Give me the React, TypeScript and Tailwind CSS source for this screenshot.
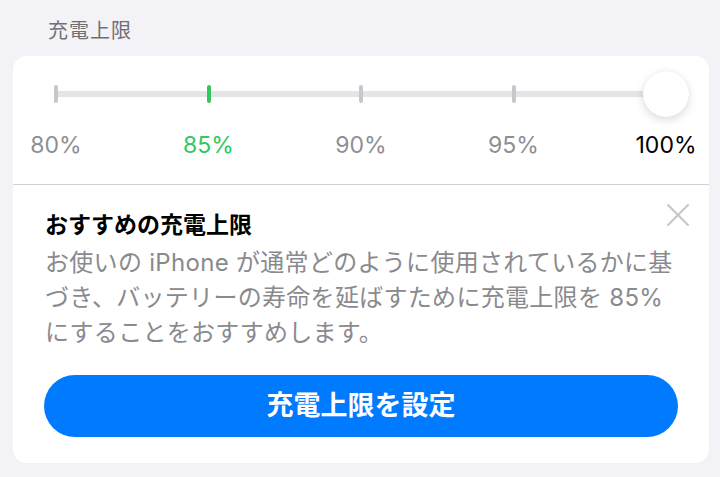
const stops = [
  { label: '80%', kind: 'tick' },
  { label: '85%', kind: 'recommended' },
  { label: '90%', kind: 'tick' },
  { label: '95%', kind: 'tick' },
  { label: '100%', kind: 'thumb' },
]

function LimitSlider() {
  return (
    <div className="relative px-[11px] pt-[15px] pb-[25px]">
      <div className="absolute left-[43px] right-[43px] top-[35px] h-[6px] rounded-full bg-[#e4e4e9]" />
      <div className="relative flex justify-between">
        {stops.map((stop) => (
          <div key={stop.label} className="flex w-[64px] flex-col items-center">
            <div className="flex h-[46px] items-center justify-center">
              {stop.kind === 'thumb' ? (
                <div className="h-[46px] w-[46px] rounded-full bg-white shadow-[0_3px_10px_rgba(0,0,0,0.14),0_0_1px_rgba(0,0,0,0.1)]" />
              ) : (
                <div
                  className={
                    stop.kind === 'recommended'
                      ? 'h-[18px] w-[4px] rounded-full bg-[#34c759]'
                      : 'h-[18px] w-[4px] rounded-full bg-[#c7c7cc]'
                  }
                />
              )}
            </div>
            <span
              className={
                stop.kind === 'recommended'
                  ? 'mt-[14px] text-[23px] leading-[28px] text-[#34c759]'
                  : stop.kind === 'thumb'
                    ? 'mt-[14px] text-[23px] leading-[28px] text-black'
                    : 'mt-[14px] text-[23px] leading-[28px] text-[#8e8e93]'
              }
            >
              {stop.label}
            </span>
          </div>
        ))}
      </div>
    </div>
  )
}

function CloseIcon() {
  return (
    <svg width="22" height="22" viewBox="0 0 22 22" fill="none" stroke="currentColor" strokeWidth="2.2" strokeLinecap="round">
      <path d="M1 1l20 20M21 1L1 21" />
    </svg>
  )
}

export default function App() {
  return (
    <div
      className="h-[477px] w-[720px] overflow-hidden bg-[#f2f2f7]"
      style={{ fontFamily: 'Inter, "Noto Sans CJK JP", sans-serif' }}
    >
      <div className="pl-[48px] pt-[17px] text-[20px] leading-[28px] tracking-[1px] text-[#6e6e73]">充電上限</div>
      <div className="ml-[13px] mt-[11px] w-[696px] rounded-[14px] bg-white">
        <LimitSlider />
        <div className="h-px bg-[#d1d1d6]" />
        <div className="relative px-[31px] pt-[25px] pb-[26px]">
          <button className="absolute right-[20px] top-[19px] text-[#c7c7cc]">
            <CloseIcon />
          </button>
          <h2 className="pl-[1px] text-[23px] font-bold leading-[30px] text-black">おすすめの充電上限</h2>
          <p className="mt-[5px] pl-[1px] text-[24px] leading-[35px] tracking-[0.3px] text-[#8a8a8e]">
            お使いの iPhone が通常どのように使用されているかに基
            <br />
            づき、バッテリーの寿命を延ばすために充電上限を 85%
            <br />
            にすることをおすすめします。
          </p>
          <button className="mt-[25px] flex h-[62px] w-full items-center justify-center rounded-full bg-[#007aff] text-[27px] font-semibold text-white">
            充電上限を設定
          </button>
        </div>
      </div>
    </div>
  )
}
